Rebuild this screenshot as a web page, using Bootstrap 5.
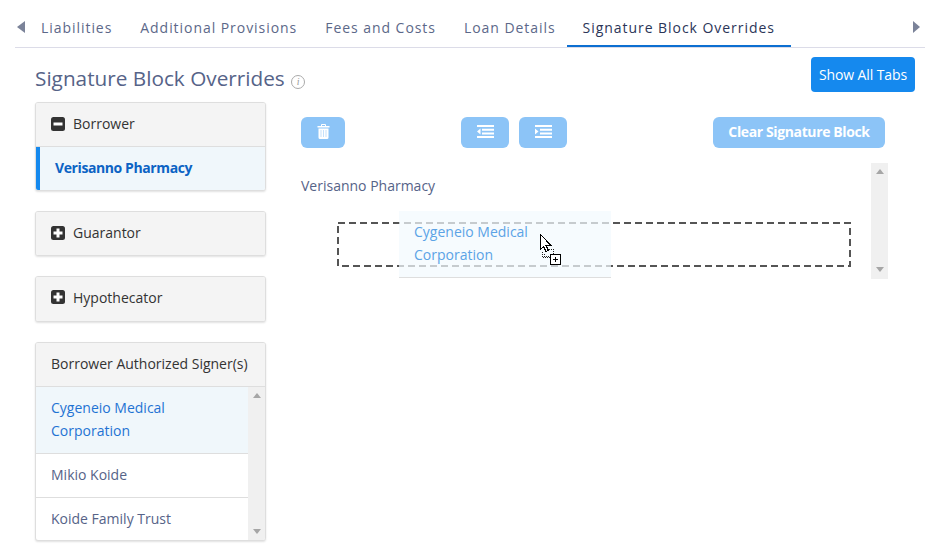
<!DOCTYPE html>
<html lang="en">
<head>
  <meta charset="UTF-8">
  <title>Signature Block Overrides</title>
  <link href="https://cdn.jsdelivr.net/npm/bootstrap@5.3.0/dist/css/bootstrap.min.css" rel="stylesheet">
  <style>
    html, body { height: 546px; overflow: hidden; }
    body { background: #fff; color: #566388; font-family: "Open Sans", "Liberation Sans", sans-serif; font-size: 14px; }
    .tab-strip { height: 48px; margin-left: 15px; border-bottom: 1px solid #dcdce8; padding-top: 7px; }
    .tab-arrow { width: 0; height: 0; border-top: 6px solid transparent; border-bottom: 6px solid transparent; margin-top: 14px; }
    .arrow-left { border-right: 8px solid #7b8399; margin-left: 2px; margin-right: 2px; }
    .arrow-right { border-left: 7px solid #7b8399; margin-left: auto; margin-right: 5px; }
    .tab-link { color: #5c6889; letter-spacing: .95px; padding: 10px 14px 0 14px; height: 40px; white-space: nowrap; }
    .tab-link.on { color: #2b3558; border-bottom: 2px solid #0c6fd1; margin-left: -3px; padding-left: 16px; padding-right: 16px; }
    .page-body { padding: 9px 10px 0 35px; }
    .page-title { font-size: 20.75px; font-weight: 400; color: #566388; margin: 0; padding-top: 9px; }
    .info-dot { width: 14px; height: 14px; border: 1px solid #aaa; border-radius: 50%; color: #999; font: italic 10px/12px "Liberation Serif", serif; text-align: center; margin-left: 1px; vertical-align: 1px; display: inline-block; }
    .btn-all { background: #1589ee; color: #fff; font-size: 14px; letter-spacing: -.1px; height: 35px; width: 104px; padding: 0; border: 0; border-radius: 4px; }
    .left-col { width: 231px; flex: none; margin-top: 10px; }
    .acc { border: 1px solid #dedede; border-radius: 3px; box-shadow: 0 1px 2px rgba(0,0,0,.12); margin-bottom: 20px; overflow: hidden; background: #fff; }
    .acc-head { background: #f4f4f4; color: #333; padding: 0 15px 2px; height: 43px; display: flex; align-items: center; gap: 8px; }
    .acc-head.lined { border-bottom: 1px solid #dedede; height: 44px; }
    .acc-tall .acc-head { height: 44px; padding-bottom: 4px; }
    .sq-icon { width: 14px; height: 14px; display: block; }
    .acc-sel { height: 43px; border-left: 4px solid #1589ee; background: #f0f7fb; color: #0c63c4; font-weight: 700; letter-spacing: -.4px; line-height: 41px; padding-left: 15px; }
    .signer-wrap { display: flex; height: 153px; }
    .signer-list { flex: 1; }
    .signer-row { padding: 9px 15px; line-height: 23px; border-bottom: 1px solid #dedede; height: 44px; }
    .signer-row.picked { background: #f0f7fb; color: #1f73d3; height: 67px; }
    .signer-row:last-child { border-bottom: 0; }
    .fake-scroll { width: 17px; background: #f0f0f0; display: flex; flex-direction: column; justify-content: space-between; align-items: center; padding: 6px 0; flex: none; }
    .up-tri { width: 0; height: 0; border-left: 4px solid transparent; border-right: 4px solid transparent; border-bottom: 5px solid #a6a6a6; }
    .down-tri { width: 0; height: 0; border-left: 4px solid transparent; border-right: 4px solid transparent; border-top: 5px solid #a6a6a6; }
    .right-col { margin-left: 35px; width: 584px; position: relative; padding-top: 25px; }
    .tool-btn { background: #8cc4f7; border: 0; border-radius: 6px; height: 31px; padding: 0 0 3px; color: #fff; display: flex; align-items: center; justify-content: center; }
    .w-trash { width: 44px; margin-right: 116px; }
    .w-indent { width: 48px; margin-right: 10px; }
    .btn-clear { width: 172px; margin-left: auto; font-weight: 700; letter-spacing: -.38px; font-size: 14px; padding-bottom: 2px; }
    .sig-box { margin-top: 15px; height: 116px; position: relative; }
    .sig-name { padding-top: 12px; }
    .sig-box .fake-scroll { position: absolute; right: -3px; top: 0; height: 116px; padding-bottom: 7px; }
    .drop-zone { position: absolute; left: 36px; top: 59px; display: block; }
    .drag-ghost { position: absolute; left: 98px; top: 48px; width: 212px; height: 67px; padding: 9px 15px; line-height: 23px; background: rgba(243,249,254,.72); color: #5ba3e6; border-bottom: 1px solid #dedede; }
    .drag-cursor { position: absolute; left: 239px; top: 71px; }
  </style>
</head>
<body>
  <div class="tab-strip d-flex">
    <span class="tab-arrow arrow-left"></span>
    <div class="tab-link">Liabilities</div>
    <div class="tab-link">Additional Provisions</div>
    <div class="tab-link">Fees and Costs</div>
    <div class="tab-link">Loan Details</div>
    <div class="tab-link on">Signature Block Overrides</div>
    <span class="tab-arrow arrow-right"></span>
  </div>

  <div class="page-body">
    <div class="d-flex justify-content-between align-items-start">
      <h1 class="page-title">Signature Block Overrides <span class="info-dot">i</span></h1>
      <button class="btn btn-all" type="button">Show All Tabs</button>
    </div>

    <div class="d-flex">
      <div class="left-col">
        <div class="acc">
          <div class="acc-head lined">
            <svg class="sq-icon" viewBox="0 0 14 14"><rect width="14" height="14" rx="2.500" fill="#333"/><rect x="2.500" y="5.500" width="9" height="3" fill="#fff"/></svg>
            Borrower
          </div>
          <div class="acc-sel">Verisanno Pharmacy</div>
        </div>
        <div class="acc">
          <div class="acc-head">
            <svg class="sq-icon" viewBox="0 0 14 14"><rect width="14" height="14" rx="2.500" fill="#333"/><path d="M5.500 2.500h3v3h3v3h-3v3h-3v-3h-3v-3h3z" fill="#fff"/></svg>
            Guarantor
          </div>
        </div>
        <div class="acc acc-tall">
          <div class="acc-head">
            <svg class="sq-icon" viewBox="0 0 14 14"><rect width="14" height="14" rx="2.500" fill="#333"/><path d="M5.500 2.500h3v3h3v3h-3v3h-3v-3h-3v-3h3z" fill="#fff"/></svg>
            Hypothecator
          </div>
        </div>
        <div class="acc">
          <div class="acc-head lined">Borrower Authorized Signer(s)</div>
          <div class="signer-wrap">
            <div class="signer-list">
              <div class="signer-row picked">Cygeneio Medical Corporation</div>
              <div class="signer-row">Mikio Koide</div>
              <div class="signer-row">Koide Family Trust</div>
            </div>
            <div class="fake-scroll"><span class="up-tri"></span><span class="down-tri"></span></div>
          </div>
        </div>
      </div>

      <div class="right-col">
        <div class="d-flex">
          <button class="tool-btn w-trash" type="button">
            <svg width="13" height="15" viewBox="0 0 13 15"><path d="M4 2V1.200C4 .5 4.500 0 5.200 0h2.600C8.500 0 9 .5 9 1.200V2h3.500v1.600H.5V2zM5 2h3V1H5zM1.500 4.400h10v9.100a1.500 1.500 0 0 1-1.500 1.500H3a1.500 1.500 0 0 1-1.500-1.500z" fill="#fff" fill-rule="evenodd"/><path d="M4 6v7M6.500 6v7M9 6v7" stroke="#c5e1fb" stroke-width="1"/></svg>
          </button>
          <button class="tool-btn w-indent" type="button">
            <svg width="17" height="13" viewBox="0 0 17 13"><path d="M0 0h17v2H0zM5 3.700h12v2H5zM5 7.400h12v2H5zM0 11h17v2H0zM3.500 3.500v6L0 6.500z" fill="#fff"/></svg>
          </button>
          <button class="tool-btn w-indent" type="button">
            <svg width="17" height="13" viewBox="0 0 17 13"><path d="M0 0h17v2H0zM5 3.700h12v2H5zM5 7.400h12v2H5zM0 11h17v2H0zM0 3.500v6l3.500-3z" fill="#fff"/></svg>
          </button>
          <button class="tool-btn btn-clear" type="button">Clear Signature Block</button>
        </div>

        <div class="sig-box">
          <div class="sig-name">Verisanno Pharmacy</div>
          <div class="fake-scroll"><span class="up-tri"></span><span class="down-tri"></span></div>
          <svg class="drop-zone" width="514" height="45" viewBox="0 0 514 45"><rect x="1" y="1" width="512" height="43" fill="none" stroke="#555" stroke-width="2" stroke-dasharray="7 4"/></svg>
          <div class="drag-ghost">Cygeneio Medical Corporation</div>
          <svg class="drag-cursor" width="24" height="34" viewBox="0 0 24 34" shape-rendering="crispEdges">
            <path d="M.5.500v15l3-3 2.500 5 2.500-1-2.500-5h5z" fill="#fff" stroke="#000" stroke-width="1"/>
            <path d="M2.500 17.500v6h12M4.500 19.500v3h7M8.500 15.500h5v5" fill="none" stroke="#222" stroke-width="1" stroke-dasharray="1 1"/>
            <rect x="10.500" y="20.500" width="10" height="10" fill="#fff" stroke="#000"/>
            <path d="M13 25.500h5M15.500 23v5" stroke="#000"/>
          </svg>
        </div>
      </div>
    </div>
  </div>
  <script src="https://cdn.jsdelivr.net/npm/bootstrap@5.3.0/dist/js/bootstrap.bundle.min.js"></script>
</body>
</html>
